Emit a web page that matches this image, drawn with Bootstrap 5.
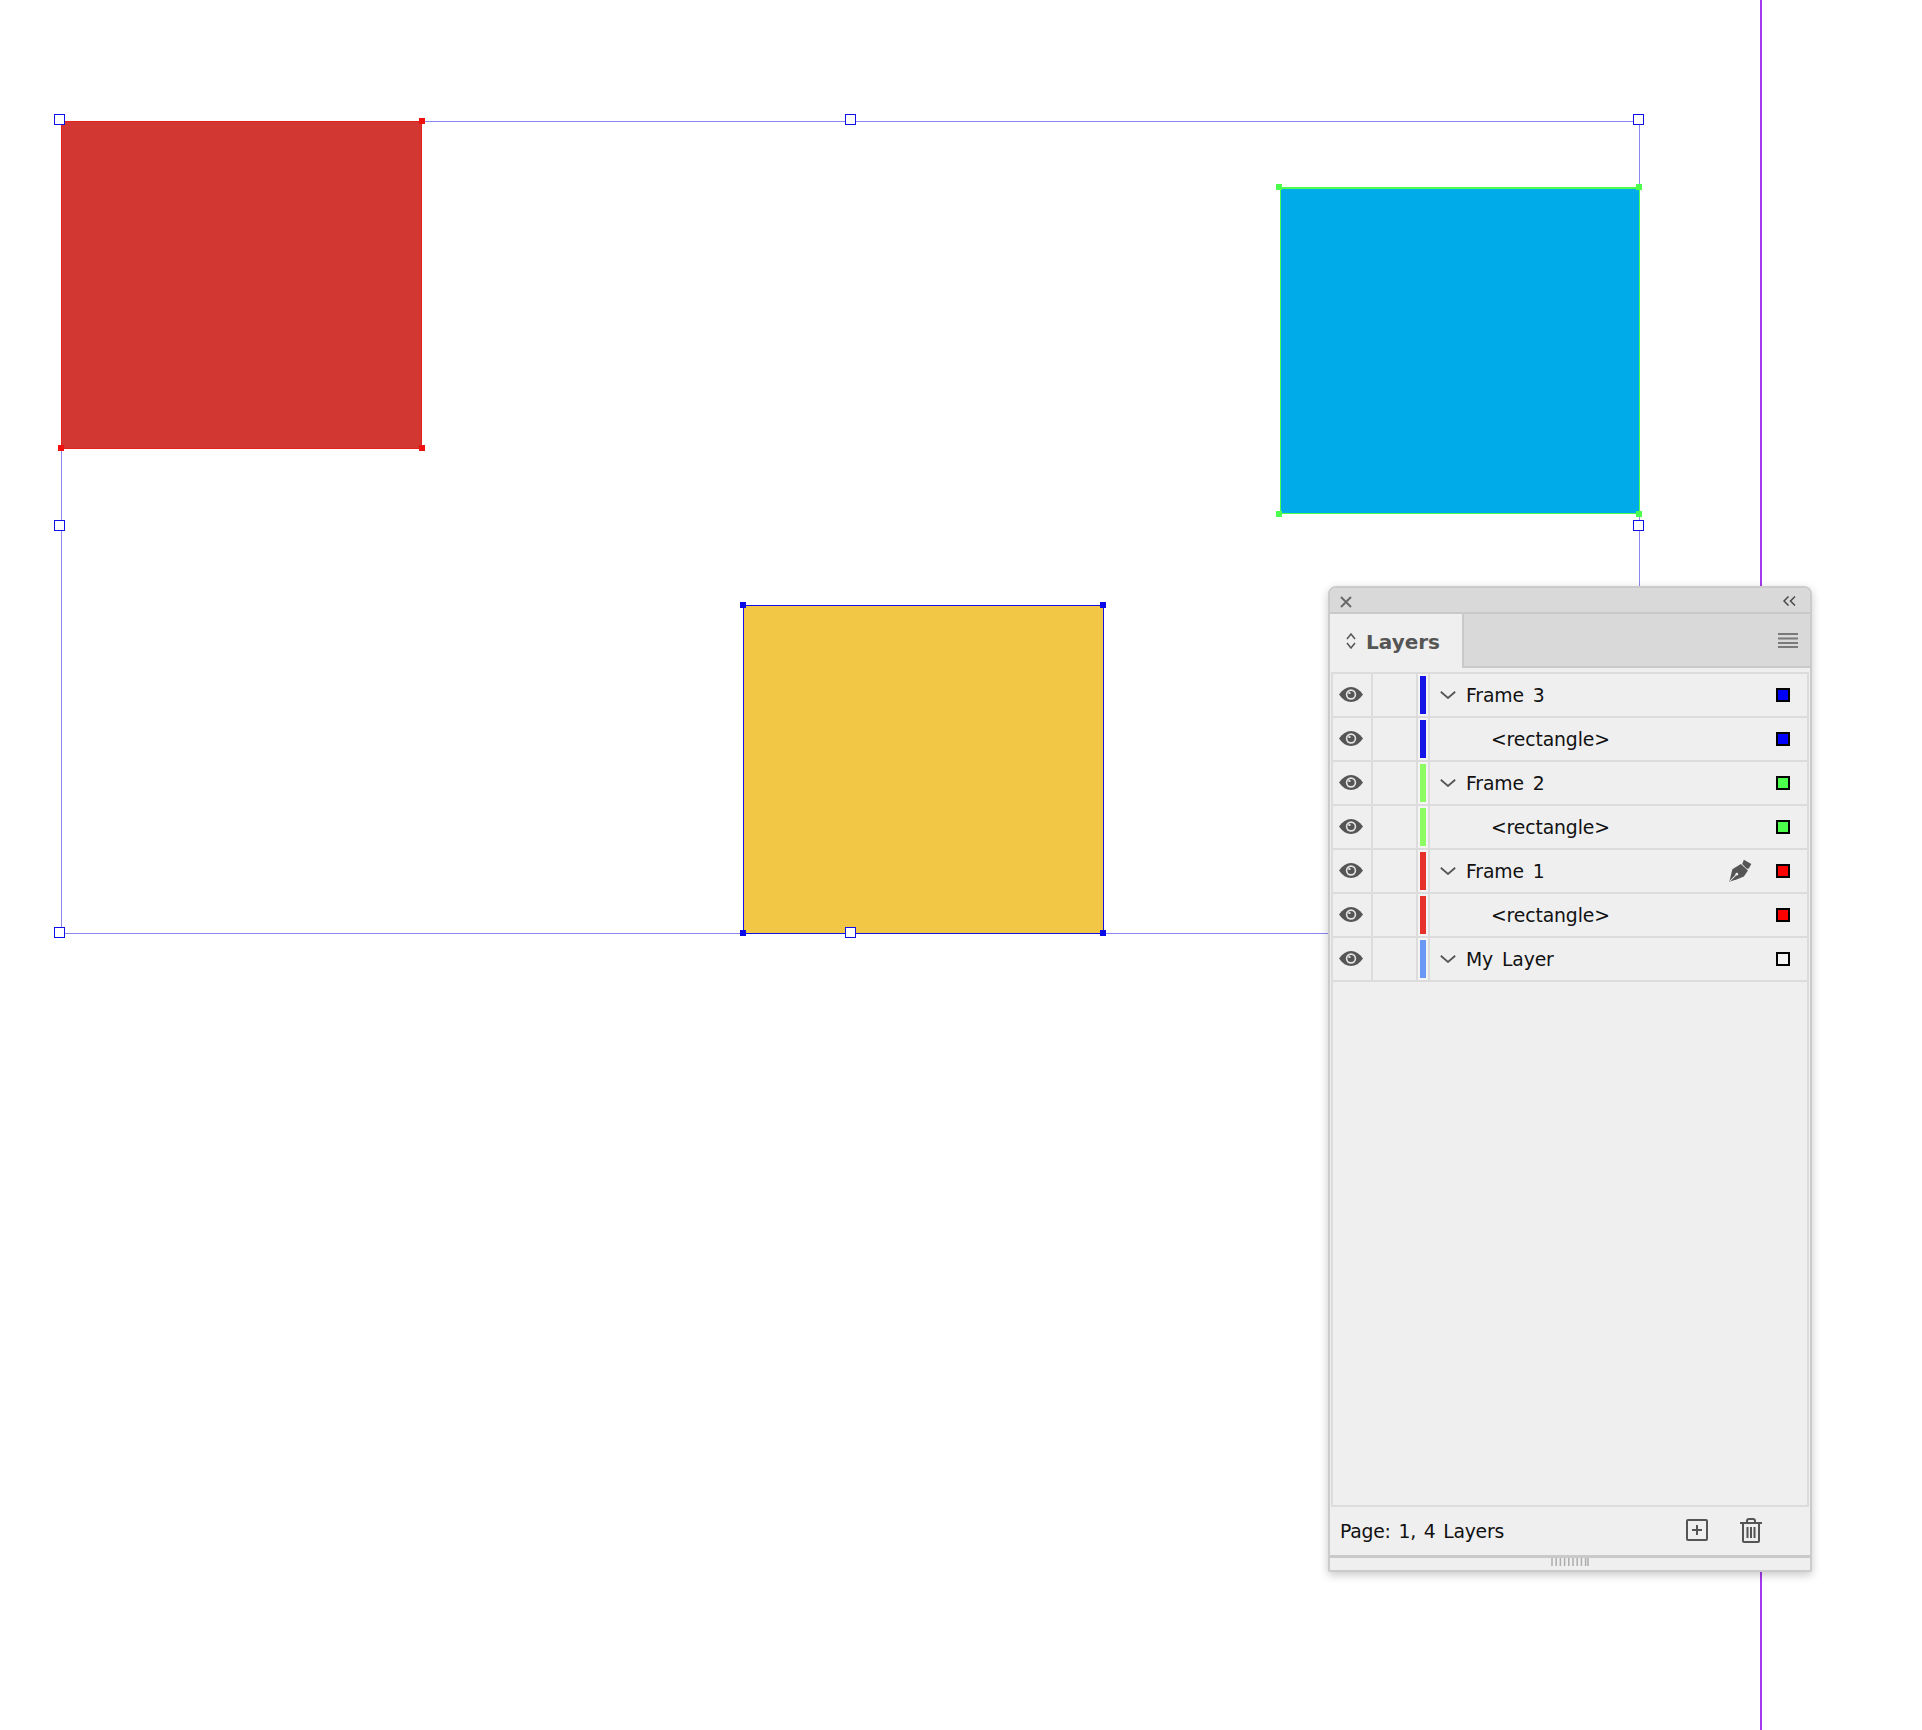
<!DOCTYPE html>
<html lang="en">
<head>
<meta charset="utf-8">
<title>Layers</title>
<link href="https://cdn.jsdelivr.net/npm/bootstrap@5.3.0/dist/css/bootstrap.min.css" rel="stylesheet">
<style>
html,body{margin:0;background:#fff}
.stage{position:relative;width:1922px;height:1730px;overflow:hidden;background:#fff;font-family:"DejaVu Sans",sans-serif}
.abs{position:absolute;box-sizing:border-box}
.guide{left:1760px;top:0;width:2px;height:1730px;background:#a43af0}
.frameline{left:61px;top:120.5px;width:1579px;height:813px;border:1.5px solid #8c86f0}
.shape-red{left:61px;top:120.5px;width:361px;height:328px;background:#d23731;border:1.5px solid #e8201c;border-left-width:1px}
.shape-blue{left:1279.5px;top:187px;width:360px;height:327px;background:#00abe9;border:1px solid #4dff4d;border-top-width:2px}
.shape-yellow{left:743px;top:604.5px;width:361px;height:329px;background:#f3c746;border:1.5px solid #1212e6}
.hd-w{width:11px;height:11px;background:#fff;border:1.5px solid #1010e8}
.h1a{left:54px;top:114px}.h1b{left:845px;top:114px}.h1c{left:1633px;top:114px}
.h1d{left:54px;top:520px}.h1e{left:1633px;top:520px}
.h1f{left:54px;top:927px}.h1g{left:845px;top:927px}
.dot{width:6px;height:6px}
.dot-r{background:#f01010}.dot-g{background:#4dff4d}.dot-b{background:#0a0ae8}
.r1{left:419px;top:118px}.r2{left:58px;top:445px}.r3{left:419px;top:445px}
.g1{left:1276px;top:184px}.g2{left:1636px;top:184px}.g3{left:1276px;top:511px}.g4{left:1636px;top:511px}
.b1{left:740px;top:601.5px}.b2{left:1100px;top:601.5px}.b3{left:740px;top:930px}.b4{left:1100px;top:930px}
/* panel */
.panel-win{left:1328px;top:586px;width:484px;height:986px;background:#efefef;border:2px solid #cbcbcb;border-radius:8px 8px 2px 2px;box-shadow:0 3px 10px rgba(0,0,0,.22)}
.titlebar{height:26px;flex:none;background:#d9d9d9;border-bottom:2px solid #c9c9c9;border-radius:6px 6px 0 0;padding:0 14px 0 10px}
.ico-x{margin-top:3px}
.ico-col{margin-top:1px}
.tabrow{height:54px;flex:none;background:#d9d9d9;border-bottom:2px solid #c9c9c9;padding-right:12px}
.tab-on{width:134px;height:54px;flex:none;background:#efefef;border-right:2px solid #c9c9c9;padding-left:16px;gap:10px}
.tab-txt{font-size:20px;font-weight:700;color:#555;line-height:1;padding-top:2px}
.layers-box{margin:4px 1px 0;border:2px solid #dcdcdc;height:835px;flex:none;background:#efefef}
.lrow{height:44px;border-bottom:2px solid #dcdcdc}
.c-eye{width:40px;height:100%;border-right:2px solid #dcdcdc;padding-right:2px;padding-bottom:2px}
.c-lock{width:45px;height:100%;border-right:2px solid #dcdcdc}
.c-bar{width:12px;height:100%;border-right:2px solid #dcdcdc;padding:2px 0 2px 2px;background:#f4f4f4}
.c-main{height:100%;padding-left:10px;padding-right:17px}
.barfill{width:6px;height:100%}
.bar-b{background:#1414e6}.bar-g{background:#8dfb62}.bar-r{background:#e6302a}.bar-l{background:#6b97f5}
.nm{font-size:18.8px;color:#111;line-height:1;letter-spacing:-.12px;word-spacing:3px;margin-left:10px;padding-top:3px}
.nm-sub{margin-left:51px}
.chev{width:16px;flex:none}
.swatch{width:14px;height:14px;border:2px solid #000}
.sw-b{background:#00f}.sw-g{background:#4dff4d}.sw-r{background:#f00}.sw-n{background:#f4f4f4}
.nib{margin-right:24px;margin-top:-2px}
.footbar{height:47px;flex:none;padding:0 0 0 10px;margin-top:1px}
.foot-txt{font-size:18.8px;color:#111;letter-spacing:-.22px;word-spacing:2px;line-height:1;padding-top:2px}
.foot-icons{gap:32px;margin-right:48px;margin-bottom:3px}
.grip-bar{border-top:3px solid #c9c9c9;height:15px;flex:none}
</style>
</head>
<body>
<div class="stage">
  <div class="abs guide"></div>
  <div class="abs frameline"></div>
  <div class="abs shape-red"></div>
  <div class="abs shape-blue"></div>
  <div class="abs shape-yellow"></div>
  <div class="abs hd-w h1a"></div><div class="abs hd-w h1b"></div><div class="abs hd-w h1c"></div>
  <div class="abs hd-w h1d"></div><div class="abs hd-w h1e"></div><div class="abs hd-w h1f"></div><div class="abs hd-w h1g"></div>
  <div class="abs dot dot-r r1"></div><div class="abs dot dot-r r2"></div><div class="abs dot dot-r r3"></div>
  <div class="abs dot dot-g g1"></div><div class="abs dot dot-g g2"></div><div class="abs dot dot-g g3"></div><div class="abs dot dot-g g4"></div>
  <div class="abs dot dot-b b1"></div><div class="abs dot dot-b b2"></div><div class="abs dot dot-b b3"></div><div class="abs dot dot-b b4"></div>

  <svg width="0" height="0" class="abs">
    <defs>
      <symbol id="eye" viewBox="0 0 24 15">
        <path d="M0 7.5C3.5 2.5 7.5 0 12 0s8.500 2.500 12 7.500C20.500 12.500 16.500 15 12 15S3.500 12.500 0 7.500Z" fill="#555"/>
        <circle cx="12" cy="7.500" r="5.200" fill="#e4e4e4"/>
        <circle cx="12" cy="7.500" r="3.600" fill="#555"/>
        <circle cx="10.400" cy="5.900" r="1.200" fill="#ddd"/>
      </symbol>
      <symbol id="chv" viewBox="0 0 16 8"><path d="M.8.8 8 7l7.200-6.200" fill="none" stroke="#555" stroke-width="1.800"/></symbol>
    </defs>
  </svg>

  <div class="abs panel-win d-flex flex-column">
    <div class="titlebar d-flex align-items-center justify-content-between">
      <svg class="ico-x" width="12" height="12" viewBox="0 0 12 12"><path d="M1 1l10 10M11 1 1 11" stroke="#6a6a6a" stroke-width="2"/></svg>
      <svg class="ico-col" width="13" height="10" viewBox="0 0 13 10"><path d="M5.500.5 1 5l4.500 4.500M12 .5 7.500 5l4.500 4.500" fill="none" stroke="#4a4a4a" stroke-width="1.500"/></svg>
    </div>
    <div class="tabrow d-flex justify-content-between align-items-start">
      <div class="tab-on d-flex align-items-center">
        <svg width="10" height="16" viewBox="0 0 10 16"><path d="M1 6l4-5 4 5M1 10l4 5 4-5" fill="none" stroke="#555" stroke-width="1.500"/></svg>
        <span class="tab-txt">Layers</span>
      </div>
      <svg class="align-self-center" width="20" height="16" viewBox="0 0 20 16"><path d="M0 2h20M0 6.500h20M0 11h20M0 15h20" stroke="#7a7a7a" stroke-width="2"/></svg>
    </div>
    <div class="layers-box">
      <div class="lrow d-flex align-items-center">
        <div class="c-eye d-flex align-items-center justify-content-center"><svg width="24" height="15"><use href="#eye"/></svg></div>
        <div class="c-lock"></div>
        <div class="c-bar"><div class="barfill bar-b"></div></div>
        <div class="c-main flex-grow-1 d-flex align-items-center">
          <svg class="chev" width="16" height="8"><use href="#chv"/></svg>
          <span class="nm flex-grow-1">Frame 3</span>
          <span class="swatch sw-b"></span>
        </div>
      </div>
      <div class="lrow d-flex align-items-center">
        <div class="c-eye d-flex align-items-center justify-content-center"><svg width="24" height="15"><use href="#eye"/></svg></div>
        <div class="c-lock"></div>
        <div class="c-bar"><div class="barfill bar-b"></div></div>
        <div class="c-main flex-grow-1 d-flex align-items-center">
          <span class="nm nm-sub flex-grow-1">&lt;rectangle&gt;</span>
          <span class="swatch sw-b"></span>
        </div>
      </div>
      <div class="lrow d-flex align-items-center">
        <div class="c-eye d-flex align-items-center justify-content-center"><svg width="24" height="15"><use href="#eye"/></svg></div>
        <div class="c-lock"></div>
        <div class="c-bar"><div class="barfill bar-g"></div></div>
        <div class="c-main flex-grow-1 d-flex align-items-center">
          <svg class="chev" width="16" height="8"><use href="#chv"/></svg>
          <span class="nm flex-grow-1">Frame 2</span>
          <span class="swatch sw-g"></span>
        </div>
      </div>
      <div class="lrow d-flex align-items-center">
        <div class="c-eye d-flex align-items-center justify-content-center"><svg width="24" height="15"><use href="#eye"/></svg></div>
        <div class="c-lock"></div>
        <div class="c-bar"><div class="barfill bar-g"></div></div>
        <div class="c-main flex-grow-1 d-flex align-items-center">
          <span class="nm nm-sub flex-grow-1">&lt;rectangle&gt;</span>
          <span class="swatch sw-g"></span>
        </div>
      </div>
      <div class="lrow d-flex align-items-center">
        <div class="c-eye d-flex align-items-center justify-content-center"><svg width="24" height="15"><use href="#eye"/></svg></div>
        <div class="c-lock"></div>
        <div class="c-bar"><div class="barfill bar-r"></div></div>
        <div class="c-main flex-grow-1 d-flex align-items-center">
          <svg class="chev" width="16" height="8"><use href="#chv"/></svg>
          <span class="nm flex-grow-1">Frame 1</span>
          <svg class="nib" width="23" height="23" viewBox="28 30 68 68"><path d="M72 32 94 45 86 59 80 58 67 45Z" fill="#555"/><path d="M63 45 84 64 72 82 52 90 29 97 38 60Z" fill="#555"/><path d="M31 95 49 77" stroke="#efefef" stroke-width="3"/><circle cx="51" cy="75" r="4" fill="#efefef"/></svg>
          <span class="swatch sw-r"></span>
        </div>
      </div>
      <div class="lrow d-flex align-items-center">
        <div class="c-eye d-flex align-items-center justify-content-center"><svg width="24" height="15"><use href="#eye"/></svg></div>
        <div class="c-lock"></div>
        <div class="c-bar"><div class="barfill bar-r"></div></div>
        <div class="c-main flex-grow-1 d-flex align-items-center">
          <span class="nm nm-sub flex-grow-1">&lt;rectangle&gt;</span>
          <span class="swatch sw-r"></span>
        </div>
      </div>
      <div class="lrow d-flex align-items-center">
        <div class="c-eye d-flex align-items-center justify-content-center"><svg width="24" height="15"><use href="#eye"/></svg></div>
        <div class="c-lock"></div>
        <div class="c-bar"><div class="barfill bar-l"></div></div>
        <div class="c-main flex-grow-1 d-flex align-items-center">
          <svg class="chev" width="16" height="8"><use href="#chv"/></svg>
          <span class="nm flex-grow-1">My Layer</span>
          <span class="swatch sw-n"></span>
        </div>
      </div>
    </div>
    <div class="footbar d-flex align-items-center justify-content-between">
      <span class="foot-txt">Page: 1, 4 Layers</span>
      <div class="foot-icons d-flex align-items-center">
        <svg width="22" height="22" viewBox="0 0 22 22"><rect x="1" y="1" width="20" height="20" rx="1" fill="none" stroke="#555" stroke-width="2"/><path d="M11 6v10M6 11h10" stroke="#555" stroke-width="2"/></svg>
        <svg width="22" height="25" viewBox="0 0 22 25"><path d="M0 5h22M7 5V3a2 2 0 0 1 2-2h4a2 2 0 0 1 2 2v2M3 5v18a1 1 0 0 0 1 1h14a1 1 0 0 0 1-1V5M7.500 9v11M11 9v11M14.500 9v11" fill="none" stroke="#555" stroke-width="2"/></svg>
      </div>
    </div>
    <div class="grip-bar d-flex justify-content-center">
      <svg width="38" height="8" viewBox="0 0 38 8"><path d="M1 0v8M5.200 0v8M9.400 0v8M13.600 0v8M17.800 0v8M22 0v8M26.200 0v8M30.400 0v8M34.600 0v8M37 0v8" stroke="#adadad" stroke-width="1.500"/></svg>
    </div>
  </div>
</div>
<script src="https://cdn.jsdelivr.net/npm/bootstrap@5.3.0/dist/js/bootstrap.bundle.min.js"></script>
</body>
</html>
